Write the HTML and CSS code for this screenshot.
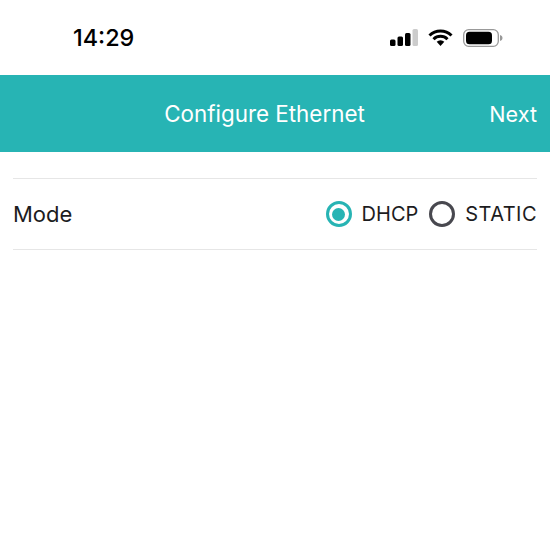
FILE: index.html
```html
<!DOCTYPE html>
<html lang="en">
<head>
  <meta charset="UTF-8">
  <title>Configure Ethernet</title>
  <link rel="stylesheet" href="styles.css">
</head>
<body>
  <!-- Status bar -->
  <div class="status-bar">
    <span class="time">14:29</span>
    <div class="status-icons">
      <svg class="signal" width="28" height="18" viewBox="0 0 28 18">
        <rect x="0" y="10.5" width="5.5" height="6.5" rx="1.5" fill="#000"/>
        <rect x="7.5" y="7.5" width="5.5" height="9.5" rx="1.5" fill="#000"/>
        <rect x="15" y="4" width="5.5" height="13" rx="1.5" fill="#000"/>
        <rect x="22.5" y="0" width="5.5" height="17" rx="1.5" fill="#ccc"/>
      </svg>
      <svg class="wifi" width="25" height="18" viewBox="0 0 25 18">
        <path d="M1.5 6.5a15.5 15.5 0 0 1 22 0M5.5 10.2a10 10 0 0 1 14 0" fill="none" stroke="#000" stroke-width="3"/>
        <path d="M8.7 12.8a5.4 5.4 0 0 1 7.6 0L12.5 17z" fill="#000"/>
      </svg>
      <svg class="battery" width="40" height="18" viewBox="0 0 40 18">
        <rect x="0.7" y="0.7" width="34.6" height="16.6" rx="5" fill="none" stroke="#999" stroke-width="1.3"/>
        <rect x="3" y="2.7" width="26" height="12.6" rx="3.5" fill="#000"/>
        <path d="M37 6c1.5.4 2.5 1.5 2.5 3s-1 2.6-2.5 3z" fill="#999"/>
      </svg>
    </div>
  </div>

  <div class="nav-bar">
    <span class="nav-title">Configure Ethernet</span>
    <span class="nav-next">Next</span>
  </div>

  <div class="content">
    <div class="row">
      <span class="row-label">Mode</span>
      <div class="radio-group">
        <span class="radio radio-on"></span>
        <span class="radio-label">DHCP</span>
        <span class="radio"></span>
        <span class="radio-label">STATIC</span>
      </div>
    </div>
  </div>
</body>
</html>
```

FILE: styles.css
```css
body {
  margin: 0;
  background-color: #fff;
  font-family: Inter, "Liberation Sans", sans-serif;
  color: #1c1c1e;
}

.status-bar {
  height: 75px;
  display: flex;
  align-items: center;
  justify-content: space-between;
  padding: 0 47px 0 73px;
  box-sizing: border-box;
}

.time {
  font-size: 23.4px;
  font-weight: 550;
  color: #000;
}

.status-icons {
  display: flex;
  align-items: center;
  gap: 10px;
}

.nav-bar {
  height: 77px;
  background-color: #27b4b4;
  color: #fff;
  font-size: 22.4px;
  display: flex;
  align-items: center;
  justify-content: center;
  padding-right: 21px;
  position: relative;
}

.nav-next {
  position: absolute;
  right: 13px;
  font-size: 21.6px;
}

.content {
  padding: 26px 13px 0;
}

.row {
  height: 70px;
  display: flex;
  align-items: center;
  justify-content: space-between;
  border-top: 1px solid #e6e6e6;
  border-bottom: 1px solid #e6e6e6;
}

.row-label {
  font-size: 22px;
}

.radio-group {
  display: flex;
  align-items: center;
  font-size: 20px;
}

.radio {
  width: 26px;
  height: 26px;
  box-sizing: border-box;
  border: 3px solid #48484f;
  border-radius: 50%;
  display: flex;
  align-items: center;
  justify-content: center;
}

.radio-on {
  border-color: #27b4b4;
}

.radio-on::after {
  content: "";
  width: 13px;
  height: 13px;
  border-radius: 50%;
  background-color: #27b4b4;
}

.radio-label {
  margin-left: 10px;
  margin-right: 11px;
}

.radio-label:last-child {
  margin-right: 0;
  letter-spacing: 0.45px;
}
```
